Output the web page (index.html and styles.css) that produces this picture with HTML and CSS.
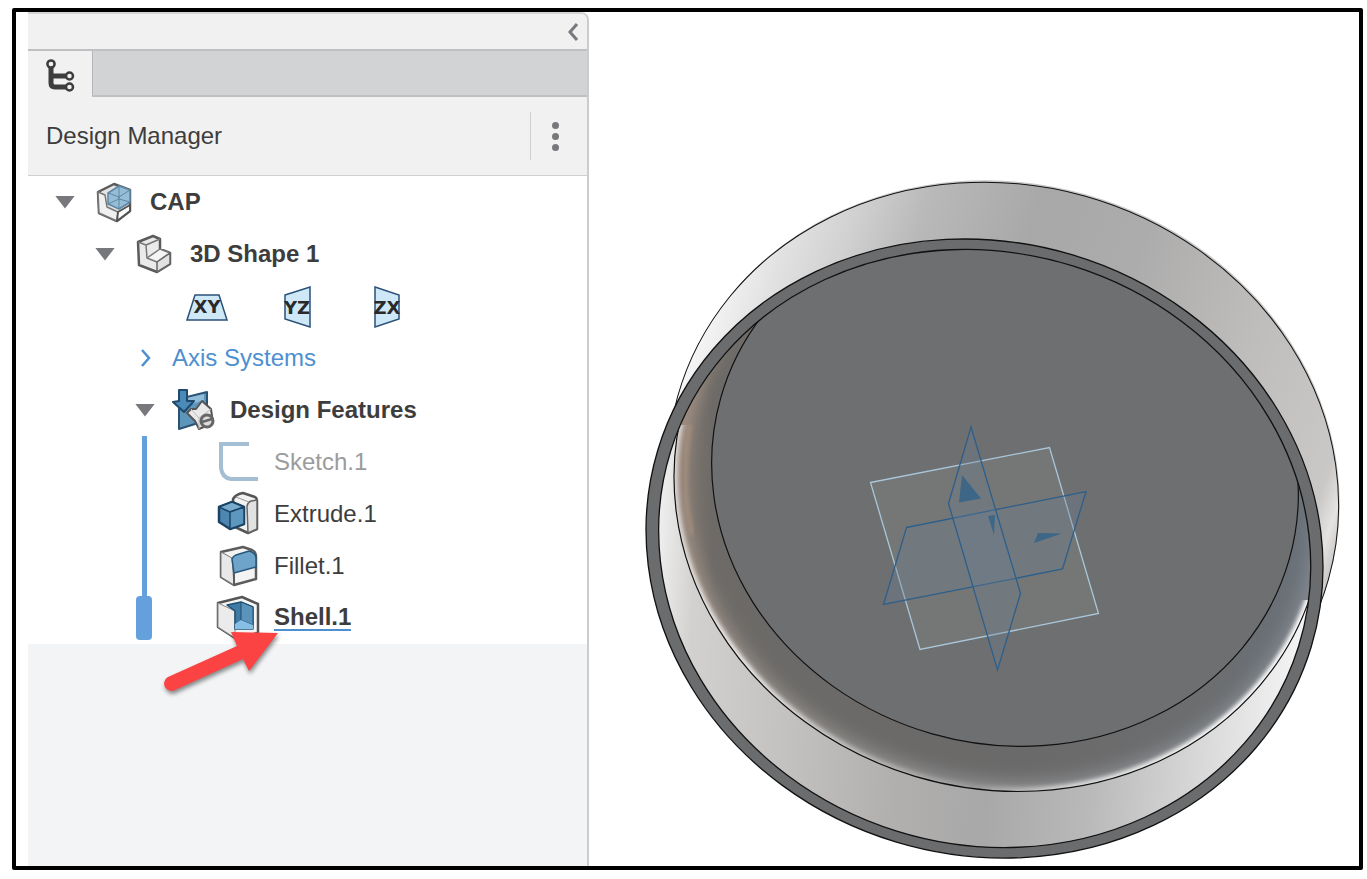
FILE: index.html
```html
<!DOCTYPE html>
<html lang="en">
<head>
    <meta charset="UTF-8">
    <meta name="viewport" content="width=device-width, initial-scale=1.0">
    <title>Design Manager</title>
    <link rel="stylesheet" href="styles.css">
</head>
<body>
    <div class="frame">
        <aside class="panel">
            <div class="panel-top">
                <button type="button" class="collapse" aria-label="Collapse panel">
                    <svg width="12" height="20" viewBox="0 0 12 20"><path d="M10 2 L3 10 L10 18" fill="none" stroke="#77797c" stroke-width="3"/></svg>
                </button>
            </div>
            <div class="tabs">
                <button type="button" class="tab" aria-label="Tree">
                    <svg width="36" height="36" viewBox="0 0 36 36" fill="none" stroke="#3d3d3d">
                        <path d="M9 11 V27 Q9 31 13 31 H24 M9 20 H24" stroke-width="5"/>
                        <g fill="#f1f1f1" stroke-width="2.500"><circle cx="9" cy="8" r="3.600"/><circle cx="27.500" cy="20" r="3.500"/><circle cx="27.500" cy="31" r="3.500"/></g>
                    </svg>
                </button>
                <div class="tab-rest"></div>
            </div>
            <div class="panel-title">
                <h1>Design Manager</h1>
                <button type="button" class="more" aria-label="More options"><span></span><span></span><span></span></button>
            </div>

            <div class="tree">
                <div class="row bold">
                    <button type="button" class="toggle" aria-label="Toggle CAP"></button>
                    <svg class="icon" viewBox="0 0 41 44" stroke-linejoin="round">
                        <path d="M6 12 L22 4 L38 10 V31 L25 41 L7 33 Z" fill="#e4e4e4" stroke="#5b5b5b" stroke-width="2.500"/>
                        <path d="M6 12 L13 15 L15 27 L26 32 L25 41 L7 33 Z" fill="#f0f0f0" stroke="#777" stroke-width="1.500"/>
                        <path d="M26 32 L38 25 V31 L25 41 Z" fill="#fff" stroke="#555" stroke-width="2"/>
                        <path d="M16 13 L27 6 L38 10 V22 L27 29 L16 24 Z" fill="#96bdd8" stroke="#5d87a3" stroke-width="1.500"/>
                        <path d="M16 13 L27 17 L38 10 M27 17 V29 M16 24 L27 19 L38 22 M27 6 V19" fill="none" stroke="#5d87a3" stroke-width="1"/>
                    </svg>
                    <span>CAP</span>
                </div>
                <div class="row bold level-2">
                    <button type="button" class="toggle" aria-label="Toggle 3D Shape 1"></button>
                    <svg class="icon" viewBox="0 0 41 44" stroke-linejoin="round">
                        <path d="M6 10 L21 4 L28 7 V17 L38 21 V32 L25 40 L7 33 Z" fill="#eaeaea" stroke="#5b5b5b" stroke-width="2.500"/>
                        <path d="M28 17 L38 21 L25 30 L15 26 Z" fill="#f5f5f5" stroke="#777" stroke-width="1.500"/>
                        <path d="M25 30 L38 21 V32 L25 40 Z" fill="#e2e2e2" stroke="#666" stroke-width="1.500"/>
                        <path d="M6 10 L14 13 L28 7 M14 13 L15 26" fill="none" stroke="#777" stroke-width="1.500"/>
                    </svg>
                    <span>3D Shape 1</span>
                </div>
                <div class="row planes">
                    <button type="button">
                        <svg width="44" height="44" viewBox="0 0 44 44"><path d="M10 11 H34 L42 36 H2 Z"/><text x="22" y="29">XY</text></svg>
                    </button>
                    <button type="button">
                        <svg width="44" height="44" viewBox="0 0 44 44"><path d="M10 11 L35 3 V43 L10 35 Z"/><text x="22" y="30">YZ</text></svg>
                    </button>
                    <button type="button">
                        <svg width="44" height="44" viewBox="0 0 44 44"><path d="M10 3 L34 11 V35 L10 43 Z"/><text x="22" y="30">ZX</text></svg>
                    </button>
                </div>
                <div class="row level-3 axis">
                    <button type="button" class="expand" aria-label="Expand Axis Systems">
                        <svg width="20" height="20" viewBox="0 0 20 20"><path d="M7 2 L14 10 L7 18" fill="none" stroke="#4d8fd1" stroke-width="2.500"/></svg>
                    </button>
                    <a href="#">Axis Systems</a>
                </div>
                <div class="row bold level-3">
                    <button type="button" class="toggle" aria-label="Toggle Design Features"></button>
                    <svg class="icon" viewBox="0 0 41 44" stroke-linejoin="round">
                        <path d="M7 11 L35 4 V30 L23 36 L7 41 Z" fill="#5e95bb" stroke="#2a5373" stroke-width="2"/>
                        <path d="M15 10 L32 6 V12 L20 16 Z" fill="#8fbcd9"/>
                        <path d="M7 2 H15 V13 L22 13 L12 24 L1 14 L7 13 Z" fill="#4a8ab8" stroke="#1f4a6b" stroke-width="2"/>
                        <path d="M15 25 L19 21 L24 21 L30 13 L39 21 L41 35 L27 41 L23 33 Z" fill="#e9e9e9" stroke="#555" stroke-width="2"/>
                        <path d="M19 21 L27 30 L27 41 M27 30 L39 21" fill="none" stroke="#bbb" stroke-width="1"/>
                        <circle cx="35" cy="33" r="6" fill="#ddd" stroke="#666" stroke-width="3"/>
                        <path d="M30 34 L40 31" stroke="#666" stroke-width="2.500"/>
                    </svg>
                    <span>Design Features</span>
                </div>

                <div class="features">
                    <div class="timeline">
                        <div class="timeline-line"></div>
                        <button type="button" class="timeline-handle" aria-label="Rollback bar"></button>
                    </div>
                    <ul>
                        <li class="row muted">
                            <svg class="icon" viewBox="0 0 41 44">
                                <path d="M33 4 H5 V28 Q6 38 15 39 H42" fill="none" stroke="#a4bfd3" stroke-width="4"/>
                            </svg>
                            <span>Sketch.1</span>
                        </li>
                        <li class="row">
                            <svg class="icon" viewBox="0 0 41 44" stroke-linejoin="round">
                                <path d="M17 7 Q20 2 27 1 L39 5 Q41 6 41 9 V37 L32 41 L19 35 Z" fill="#f1f1f1" stroke="#555" stroke-width="2.500"/>
                                <path d="M31 14 Q32 10 35 9 L41 8 V37 L32 41 Z" fill="#e2e2e2" stroke="#666" stroke-width="1.500"/>
                                <path d="M20 5 L33 10" stroke="#999" stroke-width="1"/>
                                <path d="M3 15 L16 10 L28 15 V32 L14 37 L3 30 Z" fill="#4d86b0" stroke="#1b4464" stroke-width="2.500"/>
                                <path d="M3 15 L16 10 L28 15 L14 20 Z" fill="#79abcd" stroke="#1b4464" stroke-width="1.500"/>
                                <path d="M14 20 L28 15 V32 L14 37 Z" fill="#5d97c0" stroke="#1b4464" stroke-width="1.500"/>
                            </svg>
                            <span>Extrude.1</span>
                        </li>
                        <li class="row">
                            <svg class="icon" viewBox="0 0 41 44" stroke-linejoin="round">
                                <path d="M5 8 L27 3 L36 6 Q40 8 40 13 V35 L18 41 L5 33 Z" fill="#f4f4f4" stroke="#5c5c5c" stroke-width="2.500"/>
                                <path d="M5 8 L16 14 L18 41 L5 33 Z" fill="#e8e8e8" stroke="#777" stroke-width="1"/>
                                <path d="M16 15 Q17 12 20 11 L33 7 Q40 9 40 14 V23 L18 29 Z" fill="#6ea4c9" stroke="#27587c" stroke-width="1.500"/>
                                <path d="M18 29 V41" stroke="#5c5c5c" stroke-width="2"/>
                            </svg>
                            <span>Fillet.1</span>
                        </li>
                        <li class="row bold shell">
                            <svg class="icon" viewBox="0 0 41 44" stroke-linejoin="round">
                                <path d="M2 7 L26 1 L42 8 V37 L19 42 L2 31 Z" fill="#f6f6f6" stroke="#555" stroke-width="2.500"/>
                                <path d="M2 7 L19 15 V42 L2 31 Z" fill="#ebebeb" stroke="#888" stroke-width="1"/>
                                <path d="M11 9 L25 6 L37 11 V33 H19 V15 Z" fill="#3f7ba5" stroke="#1f4f73" stroke-width="1.500"/>
                                <path d="M25 6 L37 11 V29 L25 24 Z" fill="#5b94bb" stroke="#1f4f73" stroke-width="1"/>
                                <path d="M19 28 L25 24 L37 29 V33 H19 Z" fill="#85c0e4"/>
                            </svg>
                            <a href="#">Shell.1</a>
                            <svg class="arrow" width="132" height="76" viewBox="160 624 132 76">
                                <path d="M168 677 L237 646 L231 632 L278 633 L249 671 L243 659 L175 690 A7 7 0 0 1 168 677 Z" fill="#fb4343"/>
                            </svg>
                        </li>
                    </ul>
                </div>
            </div>
        </aside>

        <main class="viewport">
            <svg viewBox="589 12 770 854" role="img" aria-label="Cap model">
                <defs>
                    <linearGradient id="outerWall" gradientUnits="userSpaceOnUse" x1="665" y1="440" x2="1340" y2="480">
                        <stop offset="0" stop-color="#f6f6f6"/>
                        <stop offset="0.080" stop-color="#e2e2e2"/>
                        <stop offset="0.160" stop-color="#d2d2d2"/>
                        <stop offset="0.260" stop-color="#b9b9b9"/>
                        <stop offset="0.420" stop-color="#a9a8a8"/>
                        <stop offset="0.580" stop-color="#adacac"/>
                        <stop offset="0.780" stop-color="#bebdbb"/>
                        <stop offset="0.950" stop-color="#c9c8c6"/>
                        <stop offset="0.980" stop-color="#e4e3e2"/>
                        <stop offset="1" stop-color="#cccbca"/>
                    </linearGradient>
                    <linearGradient id="innerWall" gradientUnits="userSpaceOnUse" x1="655" y1="580" x2="1310" y2="620">
                        <stop offset="0" stop-color="#efefef"/>
                        <stop offset="0.060" stop-color="#d2d1cf"/>
                        <stop offset="0.220" stop-color="#c2c1bf"/>
                        <stop offset="0.380" stop-color="#b1b0af"/>
                        <stop offset="0.520" stop-color="#a9a8a8"/>
                        <stop offset="0.680" stop-color="#b9b9b9"/>
                        <stop offset="0.840" stop-color="#d7d7d7"/>
                        <stop offset="1" stop-color="#f6f6f6"/>
                    </linearGradient>
                    <linearGradient id="fillet" gradientUnits="userSpaceOnUse" x1="674" y1="0" x2="1315" y2="0">
                        <stop offset="0" stop-color="#857a72"/>
                        <stop offset="0.060" stop-color="#6d6a67"/>
                        <stop offset="0.250" stop-color="#6b6a69"/>
                        <stop offset="0.550" stop-color="#6b6a6a"/>
                        <stop offset="0.850" stop-color="#6c6e70"/>
                        <stop offset="1" stop-color="#69717a"/>
                    </linearGradient>
                    <linearGradient id="glow" gradientUnits="userSpaceOnUse" x1="674" y1="0" x2="1315" y2="0">
                        <stop offset="0" stop-color="#a39183"/>
                        <stop offset="0.250" stop-color="#8f8a85"/>
                        <stop offset="0.550" stop-color="#8b8a8a"/>
                        <stop offset="1" stop-color="#82878d"/>
                    </linearGradient>
                    <linearGradient id="shine" gradientUnits="userSpaceOnUse" x1="674" y1="0" x2="1315" y2="0">
                        <stop offset="0" stop-color="#d9d3ce"/>
                        <stop offset="0.200" stop-color="#eeecea"/>
                        <stop offset="0.420" stop-color="#bcbbba"/>
                        <stop offset="0.600" stop-color="#9c9b9b"/>
                        <stop offset="0.750" stop-color="#dcdcdc"/>
                        <stop offset="0.950" stop-color="#ffffff"/>
                    </linearGradient>
                    <filter id="soft" x="-10%" y="-10%" width="120%" height="120%"><feGaussianBlur stdDeviation="8"/></filter>
                    <filter id="fine" x="-10%" y="-10%" width="120%" height="120%"><feGaussianBlur stdDeviation="2"/></filter>
                    <clipPath id="opening"><ellipse cx="984.700" cy="548.500" rx="328.800" ry="296" transform="rotate(17.300 984.700 548.500)"/></clipPath>
                    <clipPath id="bowl"><ellipse cx="999" cy="494.500" rx="327.600" ry="294.100" transform="rotate(16.600 999 494.500)"/></clipPath>
                    <clipPath id="lit"><path d="M640 425 H760 L1000 560 L1290 600 H1340 V860 H640 Z"/></clipPath>
                </defs>

                <!-- outer wall and rim -->
                <ellipse cx="1004" cy="486" rx="338" ry="303" transform="rotate(15.600 1004 486)" fill="#c8c8c8"/>
                <ellipse cx="1003" cy="488" rx="338" ry="303.200" transform="rotate(15.600 1003 488)" fill="url(#outerWall)" stroke="#111" stroke-width="1"/>
                <ellipse cx="984.500" cy="548.500" rx="341.200" ry="306.500" transform="rotate(16.700 984.500 548.500)" fill="#6b6c6d" stroke="#111" stroke-width="1.300"/>

                <!-- inside of the cap -->
                <g clip-path="url(#opening)">
                    <rect x="640" y="230" width="700" height="640" fill="url(#innerWall)"/>
                    <g clip-path="url(#bowl)">
                        <rect x="640" y="180" width="700" height="640" fill="url(#fillet)"/>
                        <ellipse cx="999" cy="494.500" rx="327.600" ry="294.100" transform="rotate(16.600 999 494.500)" fill="none" stroke="url(#glow)" stroke-width="22" filter="url(#soft)"/>
                        <g clip-path="url(#lit)">
                            <ellipse cx="999" cy="494.500" rx="327.600" ry="294.100" transform="rotate(16.600 999 494.500)" fill="none" stroke="url(#shine)" stroke-width="8" filter="url(#fine)"/>
                        </g>
                        <path d="M690 425 Q680 490 693 535" fill="none" stroke="#c9a486" stroke-opacity="0.700" stroke-width="2" filter="url(#fine)"/>
                    </g>
                    <ellipse cx="999" cy="494.500" rx="327.600" ry="294.100" transform="rotate(16.600 999 494.500)" fill="none" stroke="#111" stroke-width="1.200"/>
                    <ellipse cx="1005" cy="478.500" rx="295.500" ry="265.500" transform="rotate(15.900 1005 478.500)" fill="#6e6f71" stroke="#111" stroke-width="1.200"/>
                </g>
                <ellipse cx="984.700" cy="548.500" rx="328.800" ry="296" transform="rotate(17.300 984.700 548.500)" fill="none" stroke="#111" stroke-width="1.300"/>

                <!-- reference planes -->
                <g stroke-width="1.300">
                    <path d="M870.500 482.500 L1049.500 447.500 L1098.500 613.500 L920 649.500 Z" fill="#7d8580" fill-opacity="0.400" stroke="#a9c6da"/>
                    <path d="M906.500 527.500 L1086 491.500 L1062.500 569 L883.500 604.500 Z" fill="#6a7f92" fill-opacity="0.300" stroke="#2d5f8b"/>
                    <path d="M971 427 L1020.500 593.500 L997.500 670 L948.500 503.500 Z" fill="#6a7f92" fill-opacity="0.300" stroke="#2d5f8b"/>
                </g>
                <path d="M962 475 L981 498.500 L959 502.500 Z M988 516 L995 515 L994 535 Z M1038 533 L1062 533.500 L1034 543 Z" fill="#3d6687"/>
            </svg>
        </main>
    </div>
</body>
</html>
```

FILE: styles.css
```css
* {
    box-sizing: border-box;
}
body {
    margin: 0;
    padding: 8px 4px 9px 12px;
    min-height: 100vh;
    display: flex;
    background: #fff;
    color: #3d3d3d;
    font-family: "Liberation Sans", Arial, sans-serif;
    font-size: 24px;
    line-height: 28px;
}
button {
    padding: 0;
    border: none;
    background: none;
    cursor: pointer;
}
svg {
    display: block;
}
.frame {
    flex: 1;
    display: flex;
    border: 4px solid #000;
    border-radius: 2px;
    padding-left: 12px;
}

/* left panel */
.panel {
    flex: 0 0 561px;
    display: flex;
    flex-direction: column;
    background: #f3f4f6;
    border-top: 2px solid #d3d4d6;
    border-right: 2px solid #cbccd0;
    border-top-right-radius: 8px;
}
.panel-top {
    height: 35px;
    display: flex;
    justify-content: flex-end;
    align-items: center;
    padding-right: 8px;
    background: #f1f1f1;
    border-top-right-radius: 6px;
}
.tabs {
    display: flex;
    height: 48px;
    border-top: 2px solid #bfc0c2;
    background: #f1f1f1;
}
.tab {
    width: 64px;
    padding-left: 14px;
}
.tab-rest {
    flex: 1;
    background: #d2d3d5;
    border-left: 1px solid #b4b5b8;
    border-bottom: 2px solid #bfc0c2;
}
.panel-title {
    display: flex;
    align-items: center;
    height: 79px;
    padding-left: 18px;
    background: #f1f1f1;
    border-bottom: 1px solid #cfd0d2;
}
.panel-title h1 {
    flex: 1;
    margin: 0;
    font-size: 24px;
    font-weight: normal;
}
.more {
    width: 57px;
    height: 48px;
    padding-right: 8px;
    border-left: 1px solid #cfd0d2;
    display: flex;
    flex-direction: column;
    align-items: center;
    justify-content: center;
    gap: 4px;
}
.more span {
    width: 7px;
    height: 7px;
    border-radius: 50%;
    background: #77787b;
}

/* feature tree */
.tree {
    background: #fff;
}
.row {
    display: flex;
    align-items: center;
    gap: 17px;
    height: 52px;
    padding-left: 27px;
}
.row a {
    color: inherit;
    text-decoration: none;
}
.bold {
    font-weight: bold;
}
.level-2 {
    padding-left: 67px;
}
.level-3 {
    padding-left: 107px;
}
.toggle {
    width: 20px;
    height: 13px;
    background: #77787b;
    clip-path: polygon(0 0, 100% 0, 50% 100%);
}
.icon {
    width: 41px;
    height: 44px;
    overflow: visible;
}
.planes {
    gap: 46px;
    padding-left: 157px;
}
.planes path {
    fill: #cfe8f8;
    stroke: #2b5078;
    stroke-width: 1.5;
}
.planes text {
    font: bold 18px "DejaVu Sans", sans-serif;
    text-anchor: middle;
    fill: #2a2a2a;
}
.axis {
    color: #4d8fd1;
}
.features {
    display: flex;
    padding-left: 108px;
}
.timeline {
    width: 16px;
    padding-bottom: 4px;
    display: flex;
    flex-direction: column;
    align-items: center;
}
.timeline-line {
    flex: 1;
    width: 5px;
    background: #64a0dc;
}
.timeline-handle {
    width: 16px;
    height: 44px;
    border-radius: 4px;
    background: #64a0dc;
}
.features ul {
    flex: 1;
    margin: 0;
    padding: 0;
    list-style: none;
}
.features .row {
    padding-left: 64px;
}
.muted {
    color: #9b9b9b;
}
.shell {
    position: relative;
}
.shell a {
    line-height: 24px;
    border-bottom: 2px solid #4d8fd1;
}
.arrow {
    position: absolute;
    left: 8px;
    top: 32px;
    overflow: visible;
    filter: drop-shadow(1px 3px 2px rgba(0, 0, 0, 0.45));
    pointer-events: none;
}

/* model view */
.viewport {
    flex: 1;
    min-width: 0;
    display: flex;
}
.viewport svg {
    width: 100%;
    height: 100%;
}
```
